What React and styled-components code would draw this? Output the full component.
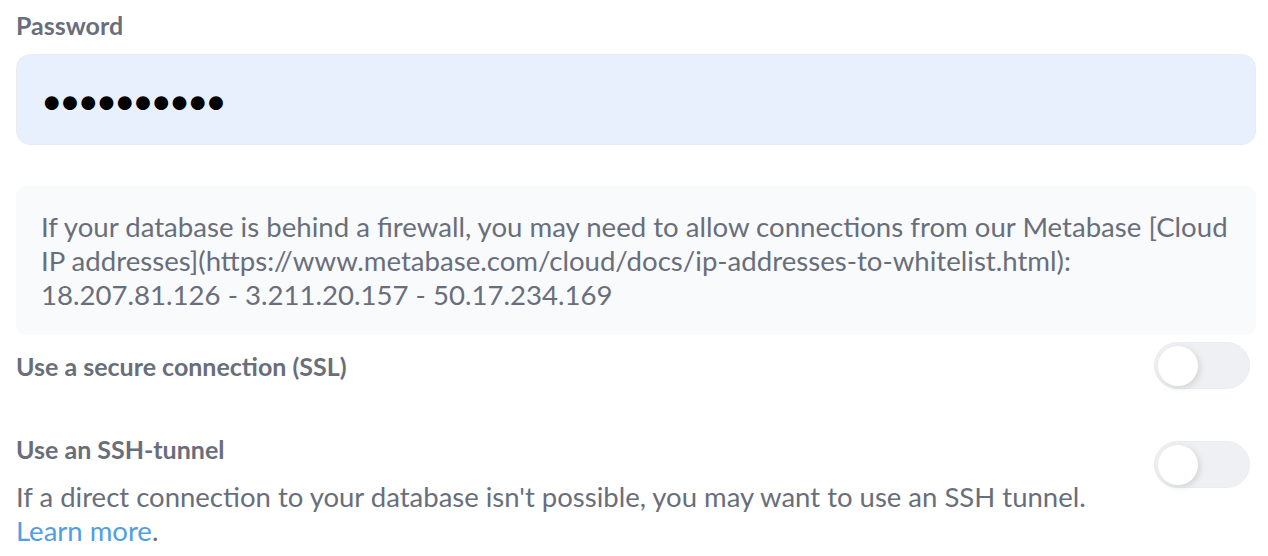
import React, { useState } from 'react';
import styled, { createGlobalStyle } from 'styled-components';

const GlobalStyle = createGlobalStyle`
  body {
    margin: 0;
    background: #fff;
    font-family: Lato, "Noto Sans", sans-serif;
  }
`;

const Page = styled.div`
  padding: 0 12px 0 16px;
  width: 1240px;
`;

const Label = styled.label`
  display: block;
  font-size: 25px;
  font-weight: 700;
  color: #696e7b;
  line-height: 30px;
  white-space: nowrap;
  margin: ${(p) => p.margin || '10px 0 0'};
`;

const PasswordInput = styled.input`
  display: block;
  box-sizing: border-box;
  width: 100%;
  height: 91px;
  margin-top: 14px;
  padding: 0 24px;
  border: 1.5px solid #ebecee;
  border-radius: 14px;
  background: #e8f0fe;
  font-family: Lato, sans-serif;
  font-size: 37px;
  letter-spacing: -3.2px;
  color: #000;
  outline: none;
`;

const InfoBox = styled.div`
  margin-top: 41px;
  padding: 24px 25px 23px;
  background: #f9fafb;
  border-radius: 10px;
  font-size: 27.6px;
  line-height: 34px;
  color: #696e7b;
`;

const Line = styled.div`
  white-space: nowrap;
`;

const ToggleRow = styled.div`
  display: flex;
  justify-content: space-between;
  align-items: ${(p) => (p.top ? 'flex-start' : 'center')};
  margin-top: ${(p) => p.mt || 0}px;
`;

const Description = styled.div`
  font-size: 27.5px;
  line-height: 34px;
  color: #696e7b;
  margin-top: 16px;
  white-space: nowrap;

  & a {
    color: #509ee3;
    text-decoration: none;
  }
`;

const Track = styled.button`
  position: relative;
  flex: none;
  width: 96px;
  height: 47px;
  padding: 0;
  margin: ${(p) => p.mt || 0}px 6px 0 0;
  border: 1.5px solid #ebecee;
  border-radius: 24px;
  background: ${(p) => (p.on ? '#509ee3' : '#eef0f3')};
  cursor: pointer;
`;

const Knob = styled.span`
  position: absolute;
  top: 3px;
  left: ${(p) => (p.on ? '51px' : '3px')};
  width: 40px;
  height: 40px;
  border-radius: 50%;
  background: #fff;
  box-shadow: 2px 2px 6px rgba(0, 0, 0, 0.12);
`;

const Toggle = ({ on, onClick, mt }) => (
  <Track on={on} mt={mt} onClick={onClick}>
    <Knob on={on} />
  </Track>
);

export default function App() {
  const [ssl, setSsl] = useState(false);
  const [ssh, setSsh] = useState(false);

  return (
    <Page>
      <GlobalStyle />
      <Label>Password</Label>
      <PasswordInput type="password" defaultValue="metabase12" />
      <InfoBox>
        <Line>
          If your database is behind a firewall, you may need to allow connections from our Metabase [Cloud
        </Line>
        <Line>IP addresses](https://www.metabase.com/cloud/docs/ip-addresses-to-whitelist.html):</Line>
        <Line>18.207.81.126 - 3.211.20.157 - 50.17.234.169</Line>
      </InfoBox>
      <ToggleRow mt={7}>
        <Label margin="0">Use a secure connection (SSL)</Label>
        <Toggle on={ssl} onClick={() => setSsl(!ssl)} />
      </ToggleRow>
      <ToggleRow top mt={45}>
        <div>
          <Label margin="0">Use an SSH-tunnel</Label>
          <Description>
            If a direct connection to your database isn't possible, you may want to use an SSH tunnel.
            <br />
            <a href="#">Learn more</a>.
          </Description>
        </div>
        <Toggle mt={7} on={ssh} onClick={() => setSsh(!ssh)} />
      </ToggleRow>
    </Page>
  );
}
